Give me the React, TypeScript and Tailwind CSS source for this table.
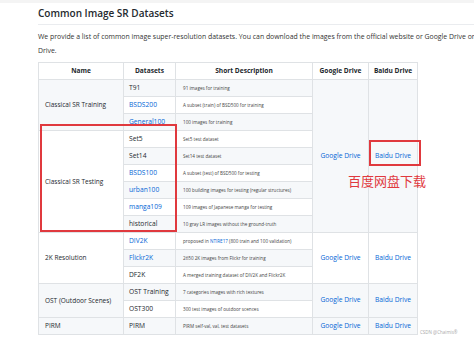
type Row = {
  name?: { text: string; span: number };
  dataset: string;
  link?: boolean;
  desc: React.ReactNode;
  drive?: { span: number };
};

const rows: Row[] = [
  { name: { text: "Classical SR Training", span: 3 }, dataset: "T91", desc: "91 images for training", drive: { span: 9 } },
  { dataset: "BSDS200", link: true, desc: "A subset (train) of BSD500 for training" },
  { dataset: "General100", link: true, desc: "100 images for training" },
  { name: { text: "Classical SR Testing", span: 6 }, dataset: "Set5", desc: "Set5 test dataset" },
  { dataset: "Set14", desc: "Set14 test dataset" },
  { dataset: "BSDS100", link: true, desc: "A subset (test) of BSD500 for testing" },
  { dataset: "urban100", link: true, desc: "100 building images for testing (regular structures)" },
  { dataset: "manga109", link: true, desc: "109 images of Japanese manga for testing" },
  { dataset: "historical", desc: "10 gray LR images without the ground-truth" },
  {
    name: { text: "2K Resolution", span: 3 },
    dataset: "DIV2K",
    link: true,
    desc: (
      <>
        proposed in <span className="text-[#0366d6]">NTIRE17</span> (800 train and 100 validation)
      </>
    ),
    drive: { span: 3 },
  },
  { dataset: "Flickr2K", link: true, desc: "2650 2K images from Flickr for training" },
  { dataset: "DF2K", desc: "A merged training dataset of DIV2K and Flickr2K" },
  { name: { text: "OST (Outdoor Scenes)", span: 2 }, dataset: "OST Training", desc: "7 categories images with rich textures", drive: { span: 2 } },
  { dataset: "OST300", desc: "300 test images of outdoor scences" },
  { name: { text: "PIRM", span: 1 }, dataset: "PIRM", desc: "PIRM self-val, val, test datasets", drive: { span: 1 } },
];

const cell = "border border-[#dfe2e5] h-[17px] p-0";

export default function App() {
  return (
    <div
      className="relative w-[474px] h-[339px] overflow-hidden bg-white text-[#24292e]"
      style={{ fontFamily: '"Open Sans", "Noto Sans CJK SC", sans-serif' }}
    >
      <div className="h-[3px] bg-[#f4f4f4]" />
      <div className="pl-[38px] w-[540px]">
        <h2 className="text-[10px] font-semibold leading-[14px] pt-[3px] pb-[4px] border-b border-[#eaecef]">
          Common Image SR Datasets
        </h2>
        <p className="mt-[5px] text-[6.9px] leading-[14px] text-[#333]">
          We provide a list of common image super-resolution datasets. You can download the images from the official website or Google Drive or Baidu
          <br />
          Drive.
        </p>
        <table className="mt-[4px] border-collapse table-fixed w-[379px]">
          <colgroup>
            <col className="w-[85px]" />
            <col className="w-[52px]" />
            <col className="w-[137px]" />
            <col className="w-[56px]" />
            <col className="w-[49px]" />
          </colgroup>
          <thead>
            <tr className="bg-white text-[6.6px] font-semibold">
              <th className={cell}>Name</th>
              <th className={cell}>Datasets</th>
              <th className={cell}>Short Description</th>
              <th className={cell}>Google Drive</th>
              <th className={cell}>Baidu Drive</th>
            </tr>
          </thead>
          <tbody>
            {rows.map((r, i) => (
              <tr key={r.dataset} className={i % 2 === 0 ? "bg-[#f6f8fa]" : "bg-white"}>
                {r.name && (
                  <td rowSpan={r.name.span} className={`${cell} pl-[6px] text-[6.5px] align-middle`}>
                    {r.name.text}
                  </td>
                )}
                <td className={`${cell} pl-[5px] text-[6.7px] ${r.link ? "text-[#0366d6]" : ""}`}>{r.dataset}</td>
                <td className={`${cell} pl-[7px] text-[4.6px] text-[#444]`}>{r.desc}</td>
                {r.drive && (
                  <>
                    <td rowSpan={r.drive.span} className={`${cell} text-center text-[6.7px] text-[#0366d6]`}>
                      Google Drive
                    </td>
                    <td rowSpan={r.drive.span} className={`${cell} text-center text-[6.7px] text-[#0366d6]`}>
                      Baidu Drive
                    </td>
                  </>
                )}
              </tr>
            ))}
          </tbody>
        </table>
      </div>

      {/* annotations drawn over the screenshot */}
      <div className="absolute left-[40px] top-[124px] w-[137px] h-[108px] border-2 border-solid border-[#e0393e]" />
      <div className="absolute left-[369px] top-[140px] w-[52px] h-[26px] border-2 border-solid border-[#e0393e]" />
      <div className="absolute left-[348px] top-[173px] text-[13px] leading-[16px] text-[#e0393e]">百度网盘下载</div>
      <div className="absolute left-[420px] top-[329px] text-[4.5px] text-[#aaa]">CSDN @Chaimis®</div>
    </div>
  );
}
